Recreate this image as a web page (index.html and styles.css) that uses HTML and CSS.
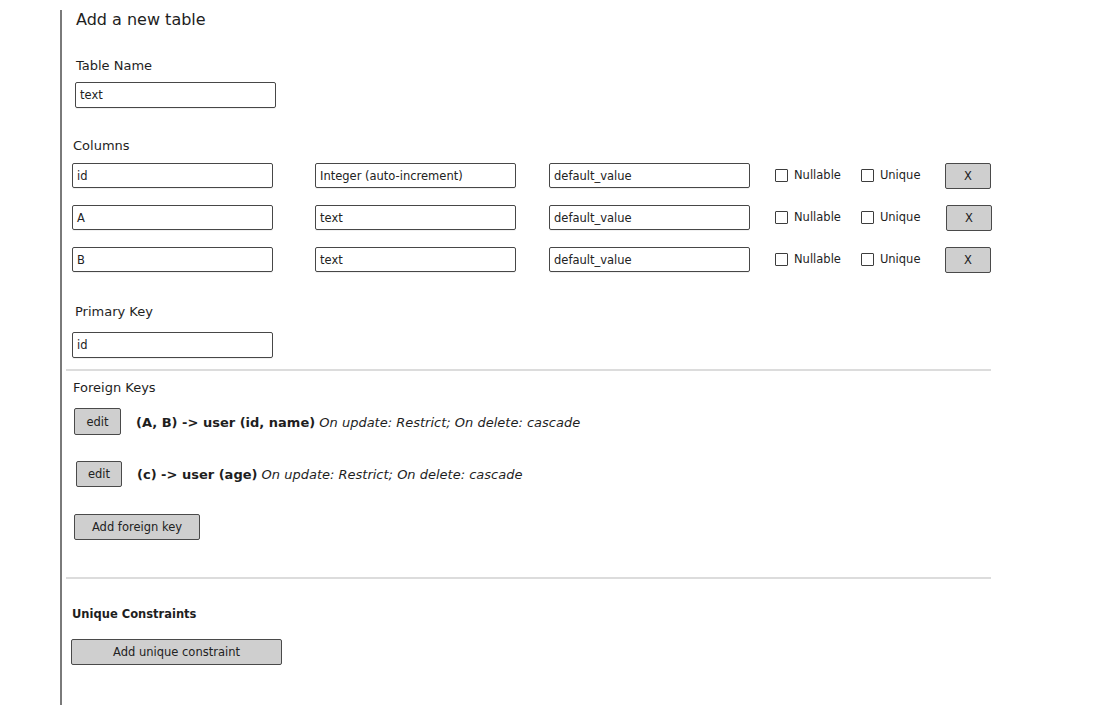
FILE: index.html
```html
<!DOCTYPE html>
<html>
<head>
<meta charset="utf-8">
<link rel="stylesheet" href="styles.css">
</head>
<body>
<div class="frame">
  <h1 class="title">Add a new table</h1>

  <div class="label lbl-table">Table Name</div>
  <div class="input w200 in-table">text</div>

  <div class="label lbl-columns">Columns</div>
  <div class="columns">
    <div class="col-row">
      <div class="input w200 c1">id</div>
      <div class="input w200 c2">Integer (auto-increment)</div>
      <div class="input w200 c3">default_value</div>
      <label class="check c4"><span class="box"></span>Nullable</label>
      <label class="check c5"><span class="box"></span>Unique</label>
      <div class="btn xbtn">X</div>
    </div>
    <div class="col-row">
      <div class="input w200 c1">A</div>
      <div class="input w200 c2">text</div>
      <div class="input w200 c3">default_value</div>
      <label class="check c4"><span class="box"></span>Nullable</label>
      <label class="check c5"><span class="box"></span>Unique</label>
      <div class="btn xbtn">X</div>
    </div>
    <div class="col-row">
      <div class="input w200 c1">B</div>
      <div class="input w200 c2">text</div>
      <div class="input w200 c3">default_value</div>
      <label class="check c4"><span class="box"></span>Nullable</label>
      <label class="check c5"><span class="box"></span>Unique</label>
      <div class="btn xbtn">X</div>
    </div>
  </div>

  <div class="label lbl-pk">Primary Key</div>
  <div class="input w200 in-pk">id</div>

  <hr class="sep sep1">

  <div class="label lbl-fk">Foreign Keys</div>
  <div class="fk-row fk1">
    <div class="btn edit">edit</div>
    <div class="fk-text"><b>(A, B) -&gt; user (id, name)</b> <i>On update: Restrict; On delete: cascade</i></div>
  </div>
  <div class="fk-row fk2">
    <div class="btn edit">edit</div>
    <div class="fk-text"><b>(c) -&gt; user (age)</b> <i>On update: Restrict; On delete: cascade</i></div>
  </div>
  <div class="btn add-fk">Add foreign key</div>

  <hr class="sep sep2">

  <div class="label bold lbl-uc">Unique Constraints</div>
  <div class="btn add-uc">Add unique constraint</div>
</div>
</body>
</html>
```

FILE: styles.css
```css
html, body {
  margin: 0;
  padding: 0;
  background: #fff;
}
body {
  font-family: "DejaVu Sans", "Noto Sans", sans-serif;
  color: #1e1e1e;
  height: 705px;
  overflow: hidden;
}
.frame {
  margin-left: 60px;
  margin-top: 10px;
  height: 695px;
  border-left: 2px solid #7a7a7a;
  padding-left: 12px;
  box-sizing: border-box;
}
.title {
  margin: 0 0 0 2px;
  font-size: 16px;
  font-weight: normal;
  line-height: 20px;
}
.label {
  font-size: 13px;
  line-height: 18px;
}
.bold { font-weight: bold; font-size: 11.5px; }
.lbl-table { margin: 27px 0 0 2px; }
.lbl-columns { margin: 29px 0 0 -1px; }
.lbl-pk { margin: 31px 0 0 1px; }
.lbl-fk { margin: 8px 0 0 -1px; }
.lbl-uc { margin: 26px 0 0 -2px; }

.input {
  height: 26px;
  box-sizing: border-box;
  border: 1.5px solid #474747;
  border-radius: 2px;
  font-size: 11.5px;
  line-height: 21px;
  padding: 2px 0 0 4px;
  color: #222;
  box-shadow: 0 1px 0 rgba(0,0,0,0.06);
}
.w200 { width: 201px; }
.in-table { margin: 7px 0 0 1px; }
.in-pk { margin: 11px 0 0 -2px; }

.columns {
  margin-top: 8px;
  display: flex;
  flex-direction: column;
  gap: 17px;
}
.col-row {
  display: flex;
  align-items: center;
  height: 25px;
}
.col-row .input { height: 25px; line-height: 20px; }
.c1 { margin-left: -2px; }
.c2 { margin-left: 42px; }
.c3 { margin-left: 33px; }
.check {
  display: flex;
  align-items: center;
  font-size: 11.5px;
  gap: 6px;
  margin-top: -1px;
}
.c4 { margin-left: 25px; }
.c5 { margin-left: 20px; }
.box {
  width: 13px;
  height: 13px;
  box-sizing: border-box;
  border: 1.3px solid #3d3d3d;
  border-radius: 1px;
  display: inline-block;
}
.btn {
  box-sizing: border-box;
  background: #cfcfcf;
  border: 1.5px solid #4a4a4a;
  border-radius: 2px;
  font-size: 11.5px;
  text-align: center;
  color: #222;
  padding-top: 2px;
}
.xbtn {
  width: 46px;
  height: 26px;
  line-height: 21px;
  margin-left: auto;
  margin-right: 115px;
}
.col-row:nth-child(2) .xbtn { margin-right: 114px; }

.sep {
  border: 0;
  height: 2px;
  background: #dcdcdc;
  margin: 11px 0 0 -8px;
  width: 925px;
}
.sep2 { margin-top: 37px; }

.fk-row {
  display: flex;
  align-items: center;
  gap: 15px;
}
.fk1 { margin-top: 11px; }
.fk2 { margin-top: 26px; margin-left: 2px; }
.edit {
  width: 47px;
  height: 27px;
  line-height: 22px;
}
.fk2 .edit { height: 26px; line-height: 21px; width: 46px; }
.fk-text {
  font-size: 13px;
  padding-top: 1px;
}
.fk-text b { font-weight: bold; }
.add-fk {
  width: 126px;
  height: 26px;
  line-height: 21px;
  margin-top: 27px;
}
.add-uc {
  width: 211px;
  height: 26px;
  line-height: 21px;
  margin: 16px 0 0 -3px;
}
```
